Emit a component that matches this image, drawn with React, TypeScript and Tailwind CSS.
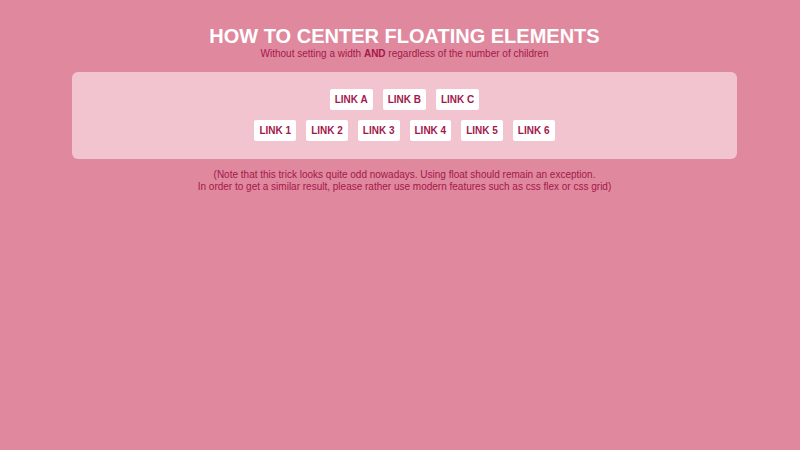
export default function App() {
  const rowA = ["LINK A", "LINK B", "LINK C"];
  const rowN = ["LINK 1", "LINK 2", "LINK 3", "LINK 4", "LINK 5", "LINK 6"];
  const link =
    "block bg-white rounded-[2px] px-[5px] h-[21px] leading-[21px] text-[10px] font-bold text-[#a3184b]";
  return (
    <div
      className="min-h-[450px] w-full bg-[#e0889e] pl-[9px] text-[#a3184b]"
      style={{ fontFamily: '"Liberation Sans", Arial, sans-serif' }}
    >
      <div className="pt-[25px] text-center">
        <h1 className="text-[20px] font-bold leading-[23px] text-white">
          HOW TO CENTER FLOATING ELEMENTS
        </h1>
        <p className="text-[10px] leading-[12px]">
          Without setting a width <b>AND</b> regardless of the number of children
        </p>
      </div>
      <div className="mx-[63px] mt-[12px] flex flex-col items-center gap-[10px] rounded-[6px] bg-[#f2c4cf] pt-[17px] pb-[18px]">
        <div className="flex gap-[10px]">
          {rowA.map((t) => (
            <a key={t} className={link}>
              {t}
            </a>
          ))}
        </div>
        <div className="flex gap-[10px]">
          {rowN.map((t) => (
            <a key={t} className={link}>
              {t}
            </a>
          ))}
        </div>
      </div>
      <p className="mt-[10px] text-center text-[10px] leading-[12px]">
        (Note that this trick looks quite odd nowadays. Using float should remain an exception.
        <br />
        In order to get a similar result, please rather use modern features such as css flex or css grid)
      </p>
    </div>
  );
}
